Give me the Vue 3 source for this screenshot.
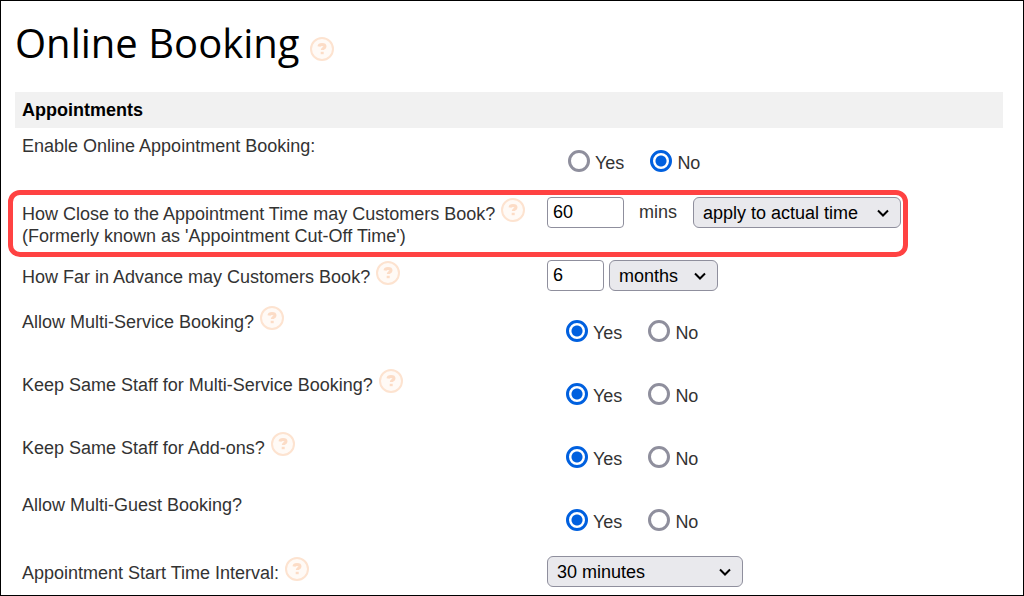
<script setup>
import { reactive } from 'vue'

const rows = reactive([
  { id: 'enable', label: 'Enable Online Appointment Booking:', type: 'toggle', value: 'No', help: false, inset: true },
  {
    id: 'cutoff',
    label: 'How Close to the Appointment Time may Customers Book?',
    note: "(Formerly known as 'Appointment Cut-Off Time')",
    type: 'cutoff',
    value: '60',
    unit: 'apply to actual time',
    options: ['apply to actual time', 'apply to start of day'],
    help: true,
  },
  {
    id: 'advance',
    label: 'How Far in Advance may Customers Book?',
    type: 'advance',
    value: '6',
    unit: 'months',
    options: ['days', 'weeks', 'months'],
    help: true,
  },
  { id: 'multi-service', label: 'Allow Multi-Service Booking?', type: 'toggle', value: 'Yes', help: true },
  { id: 'same-staff', label: 'Keep Same Staff for Multi-Service Booking?', type: 'toggle', value: 'Yes', help: true },
  { id: 'add-ons', label: 'Keep Same Staff for Add-ons?', type: 'toggle', value: 'Yes', help: true },
  { id: 'multi-guest', label: 'Allow Multi-Guest Booking?', type: 'toggle', value: 'Yes', help: false },
  {
    id: 'interval',
    label: 'Appointment Start Time Interval:',
    type: 'interval',
    unit: '30 minutes',
    options: ['15 minutes', '30 minutes', '60 minutes'],
    help: true,
  },
])
</script>

<template>
  <main class="page">
    <header class="heading">
      <h1>Online Booking</h1>
      <button type="button" class="help" aria-label="Help">
        <svg viewBox="0 0 24 24" aria-hidden="true">
          <circle cx="12" cy="12" r="11" />
          <path d="M9 9.500c.2-1.500 1.400-2 3-2 1.900 0 3 .6 3 1.900 0 1.900-2.700 1.800-2.700 3.600" />
          <path d="M12.200 14.800v2.400" />
        </svg>
      </button>
    </header>

    <form @submit.prevent>
      <h2>Appointments</h2>
      <div v-for="row in rows" :key="row.id" class="row" :class="[row.type, { helped: row.help }]">
        <div class="label">
          <span v-if="row.type === 'toggle'" :id="row.id + '-label'">{{ row.label }}</span>
          <label v-else :for="row.id">{{ row.label }}</label>
          <button v-if="row.help" type="button" class="help" aria-label="Help">
            <svg viewBox="0 0 24 24" aria-hidden="true">
              <circle cx="12" cy="12" r="11" />
              <path d="M9 9.500c.2-1.500 1.400-2 3-2 1.900 0 3 .6 3 1.900 0 1.900-2.700 1.800-2.700 3.600" />
              <path d="M12.200 14.800v2.400" />
            </svg>
          </button>
          <div v-if="row.note">{{ row.note }}</div>
        </div>

        <div
          v-if="row.type === 'toggle'"
          class="radios"
          :class="{ inset: row.inset }"
          role="radiogroup"
          :aria-labelledby="row.id + '-label'"
        >
          <label v-for="choice in ['Yes', 'No']" :key="choice">
            <input v-model="row.value" type="radio" :name="row.id" :value="choice" />
            <span>{{ choice }}</span>
          </label>
        </div>

        <div v-else class="fields">
          <input v-if="row.value" :id="row.id" v-model="row.value" type="text" class="box" />
          <span v-if="row.type === 'cutoff'" class="unit">mins</span>
          <div class="select">
            <select :id="row.value ? row.id + '-unit' : row.id" v-model="row.unit" :aria-label="row.label">
              <option v-for="option in row.options" :key="option">{{ option }}</option>
            </select>
            <svg viewBox="0 0 12 8" aria-hidden="true"><path d="M1 1.500l5 5 5-5" /></svg>
          </div>
        </div>
      </div>
    </form>
  </main>
</template>

<style>
body {
  background: #fff;
}
</style>

<style scoped>
.page {
  box-sizing: border-box;
  min-height: 100vh;
  padding: 0 20px 0 14px;
  border: 1px solid #000;
  color: #333;
  font: 18px/22px "Liberation Sans", Arial, sans-serif;
}

.heading {
  display: flex;
  align-items: center;
  gap: 10px;
  height: 91px;
  box-sizing: border-box;
  padding-top: 4px;
}

h1 {
  margin: 0;
  padding-bottom: 12px;
  color: #000;
  font: 400 40px/48px "Open Sans", sans-serif;
}

h2 {
  margin: 0;
  padding: 7px;
  background: #f1f1f1;
  color: #000;
  font-size: 18px;
  font-weight: 700;
  line-height: 22px;
}

.help {
  width: 24px;
  height: 24px;
  padding: 0;
  border: 0;
  background: none;
  cursor: pointer;
}

.help svg {
  display: block;
  fill: #fffaf6;
  stroke: #fde3d0;
  stroke-width: 2;
}

.help path {
  fill: none;
  stroke: #fcdcc6;
  stroke-width: 3;
}

.row {
  position: relative;
  display: grid;
  grid-template-columns: 525px auto;
  justify-content: start;
  box-sizing: border-box;
  padding: 7px 0 7px 7px;
}

.label .help {
  margin-left: 6px;
  vertical-align: -2px;
}

.helped .label {
  padding-top: 1px;
}

.toggle {
  min-height: 62px;
}

.toggle.helped {
  min-height: 63px;
}

.cutoff {
  width: fit-content;
  height: 63px;
}

.cutoff::after {
  content: "";
  position: absolute;
  inset: 0 -7px -4px;
  border: 5px solid #ff4242;
  border-radius: 12px;
  pointer-events: none;
}

.radios {
  display: flex;
  gap: 26px;
  padding: 15px 0 0 19px;
}

.radios.inset {
  padding-left: 21px;
}

.radios label {
  display: flex;
  gap: 5px;
  height: 22px;
}

.radios span {
  padding-top: 2px;
}

.radios input {
  appearance: none;
  box-sizing: border-box;
  width: 22px;
  height: 22px;
  margin: 0;
  border: 3px solid #8f8f9d;
  border-radius: 50%;
  background: #fff;
}

.radios input:checked {
  border-color: #0060df;
  background: radial-gradient(circle, #0060df 5px, #fff 6px);
}

.fields {
  display: flex;
  align-items: flex-start;
  gap: 5px;
}

.cutoff .fields {
  gap: 15px;
}

.unit {
  width: 39px;
  line-height: 31px;
}

.box,
select {
  appearance: none;
  box-sizing: border-box;
  height: 31px;
  margin: 0;
  border: 1px solid #8f8f9d;
  color: #000;
  font: inherit;
}

.box {
  width: 57px;
  padding: 0 5px;
  border-radius: 4px;
  background: #fff;
}

.cutoff .box {
  width: 77px;
}

.select {
  position: relative;
  width: 109px;
}

.cutoff .select {
  width: 208px;
}

.interval .select {
  width: 196px;
}

select {
  display: block;
  width: 100%;
  padding: 0 9px;
  border-radius: 6px;
  background: #e9e9ed;
}

.select svg {
  position: absolute;
  top: 12px;
  right: 12px;
  width: 12px;
  height: 8px;
  fill: none;
  stroke: #000;
  stroke-width: 2;
  pointer-events: none;
}
</style>
